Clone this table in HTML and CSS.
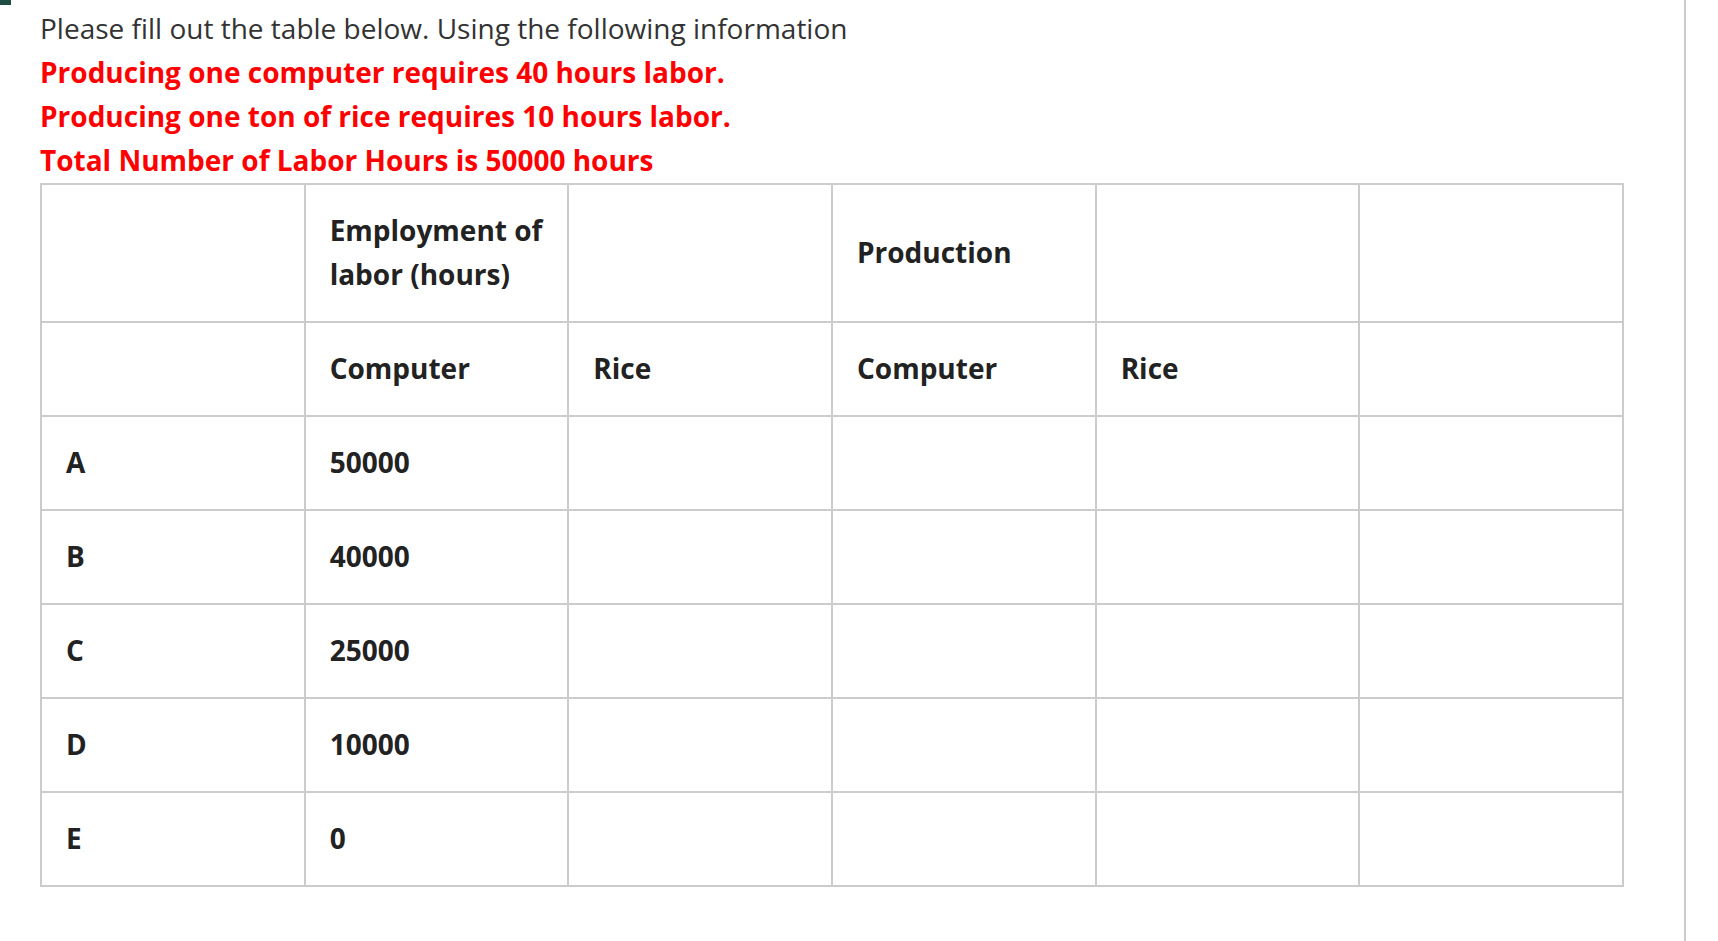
FILE: index.html
```html
<!DOCTYPE html>
<html lang="en">
<head>
<meta charset="utf-8">
<title>Table</title>
<link rel="stylesheet" href="styles.css">
</head>
<body>
<div class="corner"></div>
<div class="page">
  <div class="question">
    <p class="intro">Please fill out the table below. Using the following information</p>
    <p class="info">Producing one computer requires 40 hours labor.</p>
    <p class="info">Producing one ton of rice requires 10 hours labor.</p>
    <p class="info">Total Number of Labor Hours is 50000 hours</p>
    <table class="grid">
      <tr class="head">
        <td></td>
        <td>Employment of labor (hours)</td>
        <td></td>
        <td>Production</td>
        <td></td>
        <td></td>
      </tr>
      <tr>
        <td></td>
        <td>Computer</td>
        <td>Rice</td>
        <td>Computer</td>
        <td>Rice</td>
        <td></td>
      </tr>
      <tr><td>A</td><td>50000</td><td></td><td></td><td></td><td></td></tr>
      <tr><td>B</td><td>40000</td><td></td><td></td><td></td><td></td></tr>
      <tr><td>C</td><td>25000</td><td></td><td></td><td></td><td></td></tr>
      <tr><td>D</td><td>10000</td><td></td><td></td><td></td><td></td></tr>
      <tr><td>E</td><td>0</td><td></td><td></td><td></td><td></td></tr>
    </table>
  </div>
</div>
</body>
</html>
```

FILE: styles.css
```css
html, body {
  margin: 0;
  padding: 0;
  background: #fff;
  height: 100%;
}
body {
  font-family: "Open Sans", "Liberation Sans", sans-serif;
  font-size: 28px;
  line-height: 44px;
  color: #333;
  position: relative;
}
.corner {
  position: absolute;
  left: 0;
  top: 0;
  width: 11px;
  height: 5px;
  background: #1e4d44;
}
.page {
  width: 1686px;
  min-height: 100%;
  border-right: 2px solid #ccc;
  box-sizing: border-box;
  padding: 6px 0 0 40px;
}
.question p {
  margin: 0;
}
.intro {
  color: #333;
}
.info {
  color: #ff0000;
  font-weight: 700;
}
.grid {
  margin-top: 1px;
  border-collapse: collapse;
  width: 1584px;
  table-layout: fixed;
  border: 2px solid #ccc;
}
.grid td {
  border: 2px solid #ccc;
  padding: 23px 20px 25px 24px;
  font-weight: 700;
  color: #222;
  vertical-align: middle;
  line-height: 44px;
}
```
